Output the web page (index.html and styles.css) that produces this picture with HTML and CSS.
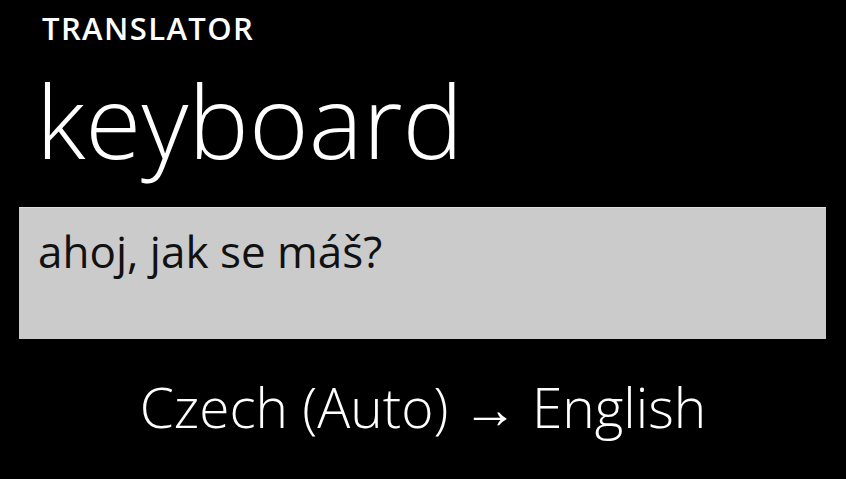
FILE: index.html
```html
<!DOCTYPE html>
<html lang="cs">
<head>
<meta charset="utf-8">
<title>Translator</title>
<link rel="stylesheet" href="styles.css">
</head>
<body>
<main class="page">
  <header class="app-title">TRANSLATOR</header>
  <h1 class="page-title">keyboard</h1>
  <div class="input-box">ahoj, jak se máš?</div>
  <div class="lang-pair">Czech (Auto) → English</div>
</main>
</body>
</html>
```
FILE: styles.css
```css
html, body {
  margin: 0;
  padding: 0;
  background: #000;
  width: 846px;
  height: 479px;
  overflow: hidden;
}
.page {
  display: flex;
  flex-direction: column;
  font-family: "Open Sans", "Noto Sans", sans-serif;
  color: #fff;
}
.app-title {
  font-size: 31px;
  font-weight: 600;
  line-height: 30px;
  letter-spacing: 1.4px;
  padding: 13px 0 0 42px;
}
.page-title {
  margin: 0;
  font-size: 102px;
  font-weight: 300;
  line-height: 100px;
  padding: 27px 0 0 36px;
  letter-spacing: 0;
}
.input-box {
  margin: 37px 20px 0 19px;
  height: 132px;
  background: #cbcbcb;
  border-top: 1px solid #dedede;
  color: #111;
  font-size: 44px;
  line-height: 44px;
  padding: 21px 0 0 19px;
  box-sizing: border-box;
}
.lang-pair {
  margin-top: 40px;
  text-align: center;
  font-size: 55px;
  font-weight: 300;
  line-height: 56px;
}
```
